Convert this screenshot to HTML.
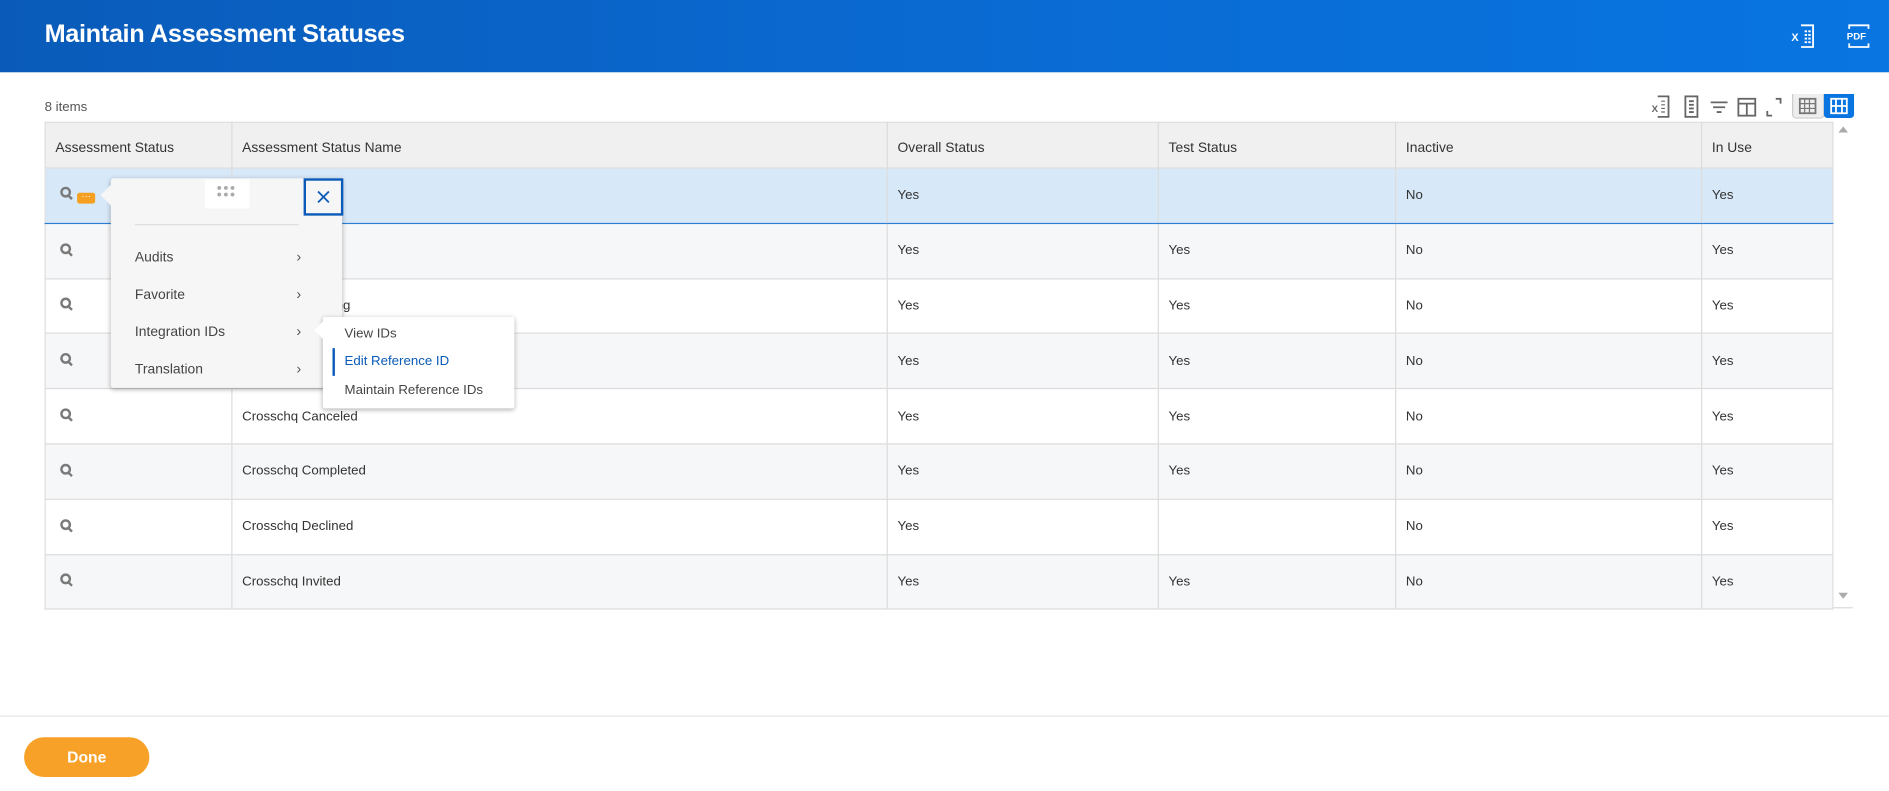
<!DOCTYPE html>
<html><head><meta charset="utf-8"><style>
*{box-sizing:border-box;margin:0;padding:0}
html,body{width:1889px;height:791px;overflow:hidden;background:#fff}
#w{width:1568px;height:657px;transform:scale(1.2047);transform-origin:0 0;position:relative;font-family:"Liberation Sans",sans-serif;color:#333;font-size:11px}
.hdr{position:absolute;left:0;top:0;width:1568px;height:60px;background:linear-gradient(90deg,#0a5bb9,#0a6ad2 50%,#0875e1)}
.hdr h1{position:absolute;left:37px;top:17px;color:#fff;font-size:21px;font-weight:bold;letter-spacing:-0.3px}
.a{position:absolute}
table{position:absolute;left:37px;top:101px;border-collapse:collapse;width:1485px;table-layout:fixed}
td{border:1px solid #dcdcdc;padding:0 8px;height:45.8px;font-size:11px;vertical-align:middle}
tr.h td{height:38px;background:#f0f0f1;padding-top:4px;font-size:11.5px}
tr:nth-child(odd):not(.h) td{background:#f6f7f8}
tr.sel td{background:#d7e8f8;border-top:1px solid #2a7fd4;border-bottom:1px solid #2a7fd4}
td:first-child{padding-left:12px}
.mg{display:inline-block;width:11px;height:11px;position:relative;vertical-align:-1px}
.mg:before{content:"";position:absolute;left:0;top:0;width:5px;height:5px;border:2px solid #7a7a7a;border-radius:50%}
.mg:after{content:"";position:absolute;left:7px;top:6px;width:2px;height:5px;background:#7a7a7a;transform:rotate(-45deg)}
.menu{position:absolute;left:92px;top:148px;width:192px;height:174px;background:#f6f6f6;box-shadow:0 1px 4px rgba(0,0,0,.3);border-radius:2px}
.mi{position:absolute;left:20px;font-size:11.5px;color:#444}
.ch{position:absolute;left:154px;color:#555;font-size:12px}
.sub{position:absolute;left:268px;top:263px;width:159px;height:76px;background:#fff;box-shadow:0 1px 4px rgba(0,0,0,.3);border-radius:2px}
.sub div{position:absolute;left:18px;font-size:11px;color:#444}
</style></head><body><div id="w">
<div class="hdr"><h1>Maintain Assessment Statuses</h1>
<svg class="a" style="left:1487px;top:19px" width="22" height="22" viewBox="0 0 22 22" fill="none" stroke="#fff" stroke-width="1.5"><path d="M8 2h10v18H8"/><text x="0" y="15" fill="#fff" stroke="none" font-size="9" font-weight="bold" font-family="Liberation Sans">X</text><path d="M11 7h5M11 10h5M11 13h5M11 16h5" stroke-dasharray="2 1"/></svg>
<svg class="a" style="left:1532px;top:19px" width="22" height="22" viewBox="0 0 22 22" fill="none" stroke="#fff" stroke-width="1.5"><path d="M3 5V2h16v3M3 17v3h16v-3"/><text x="1" y="14" fill="#fff" stroke="none" font-size="8" font-weight="bold" font-family="Liberation Sans">PDF</text></svg>
</div>
<div class="a" style="left:37px;top:83px;font-size:11px;color:#555">8 items</div>
<svg class="a" style="left:1370px;top:78px" width="170" height="22" viewBox="0 0 170 22" fill="none" stroke="#666" stroke-width="1.5">
<path d="M6 2h9v17H6"/><text x="1" y="15" fill="#666" stroke="none" font-size="8" font-weight="bold" font-family="Liberation Sans">X</text><path d="M9 6h3M9 9h3M9 12h3M9 15h3" stroke-width="1"/>
<rect x="29" y="2" width="10" height="17"/><path d="M32 6h4M32 9h4M32 12h4M32 15h4"/>
<path d="M50 7h14M52 11h10M55 15h4"/>
<rect x="73" y="4" width="14" height="14"/><path d="M73 8h14M80 8v10"/>
<path d="M97 14v4h4M104 4h4v4"/>
<rect x="118" y="-4" width="26" height="24" rx="3" fill="#eee" stroke="#ccc" stroke-width="1"/>
<rect x="124" y="4" width="13" height="12" stroke="#777"/><path d="M124 8h13M124 12h13M128 4v12M132 4v12" stroke="#777" stroke-width="1"/>
<rect x="144" y="-4" width="25" height="24" rx="3" fill="#0875e1" stroke="none"/>
<rect x="150" y="4" width="13" height="12" stroke="#fff"/><path d="M150 10h13M154 4v12M159 4v12" stroke="#fff"/>
</svg>
<table>
<tr class="h"><td style="width:155px;padding-left:8px">Assessment Status</td><td style="width:544px">Assessment Status Name</td><td style="width:225px">Overall Status</td><td style="width:197px">Test Status</td><td style="width:254px">Inactive</td><td>In Use</td></tr>
<tr class="sel"><td><span class="mg"></span> <span style="display:inline-block;width:15px;height:9px;background:#f5a020;border-radius:2px;vertical-align:0;color:#fff;font-size:8px;line-height:5px;text-align:center">···</span></td><td>Crosschq Invite</td><td>Yes</td><td></td><td>No</td><td>Yes</td></tr>
<tr><td><span class="mg"></span></td><td>Crosschq Sent</td><td>Yes</td><td>Yes</td><td>No</td><td>Yes</td></tr>
<tr><td><span class="mg"></span></td><td>Crosschq Pending</td><td>Yes</td><td>Yes</td><td>No</td><td>Yes</td></tr>
<tr><td><span class="mg"></span></td><td>Crosschq Started</td><td>Yes</td><td>Yes</td><td>No</td><td>Yes</td></tr>
<tr><td><span class="mg"></span></td><td>Crosschq Canceled</td><td>Yes</td><td>Yes</td><td>No</td><td>Yes</td></tr>
<tr><td><span class="mg"></span></td><td>Crosschq Completed</td><td>Yes</td><td>Yes</td><td>No</td><td>Yes</td></tr>
<tr><td><span class="mg"></span></td><td>Crosschq Declined</td><td>Yes</td><td></td><td>No</td><td>Yes</td></tr>
<tr><td><span class="mg"></span></td><td>Crosschq Invited</td><td>Yes</td><td>Yes</td><td>No</td><td>Yes</td></tr>
</table>
<div class="a" style="left:1522px;top:101px;width:16px;height:404px;background:#fff;border-bottom:1px solid #d9d9d9"></div>
<div class="a" style="left:1526px;top:105px;border:4px solid transparent;border-bottom:5px solid #aaa;border-top:0"></div>
<div class="a" style="left:1526px;top:492px;border:4px solid transparent;border-top:5px solid #aaa;border-bottom:0"></div>
<div class="menu">
<div class="a" style="left:-6px;top:8px;width:12px;height:12px;background:#f6f6f6;transform:rotate(45deg)"></div>
<div class="a" style="left:78px;top:1px;width:37px;height:24px;background:#fff"></div>
<svg class="a" style="left:88px;top:6px" width="16" height="10"><g fill="#aaa"><circle cx="2" cy="2" r="1.6"/><circle cx="7.5" cy="2" r="1.6"/><circle cx="13" cy="2" r="1.6"/><circle cx="2" cy="7.5" r="1.6"/><circle cx="7.5" cy="7.5" r="1.6"/><circle cx="13" cy="7.5" r="1.6"/></g></svg>
<div class="a" style="left:160px;top:0;width:33px;height:31px;border:2px solid #0a5bb9;background:#f6f6f6"></div>
<svg class="a" style="left:171px;top:10px" width="11" height="11"><path d="M1 1L10 10M10 1L1 10" stroke="#0a5bb9" stroke-width="1.5"/></svg>
<div class="a" style="left:20px;top:38px;width:136px;height:1px;background:#ddd"></div>
<div class="mi" style="top:60px">Audits</div><div class="ch" style="top:58px">›</div>
<div class="mi" style="top:91px">Favorite</div><div class="ch" style="top:89px">›</div>
<div class="mi" style="top:122px">Integration IDs</div><div class="ch" style="top:120px">›</div>
<div class="mi" style="top:153px">Translation</div><div class="ch" style="top:151px">›</div>
</div>
<div class="sub">
<div class="a" style="left:-5px;top:6px;width:10px;height:10px;background:#fff;transform:rotate(45deg)"></div>
<div style="top:8px">View IDs</div>
<div class="a" style="left:8px;top:26px;width:2px;height:23px;background:#0a5bb9"></div>
<div style="top:31px;color:#0a5bb9">Edit Reference ID</div>
<div style="top:55px">Maintain Reference IDs</div>
</div>
<div class="a" style="left:0;top:594px;width:1568px;height:1px;background:#e6e6e6"></div>
<div class="a" style="left:20px;top:612px;width:104px;height:33px;background:#f7a128;border-radius:17px;color:#fff;font-weight:bold;font-size:13px;text-align:center;line-height:33px">Done</div>
</div></body></html>
